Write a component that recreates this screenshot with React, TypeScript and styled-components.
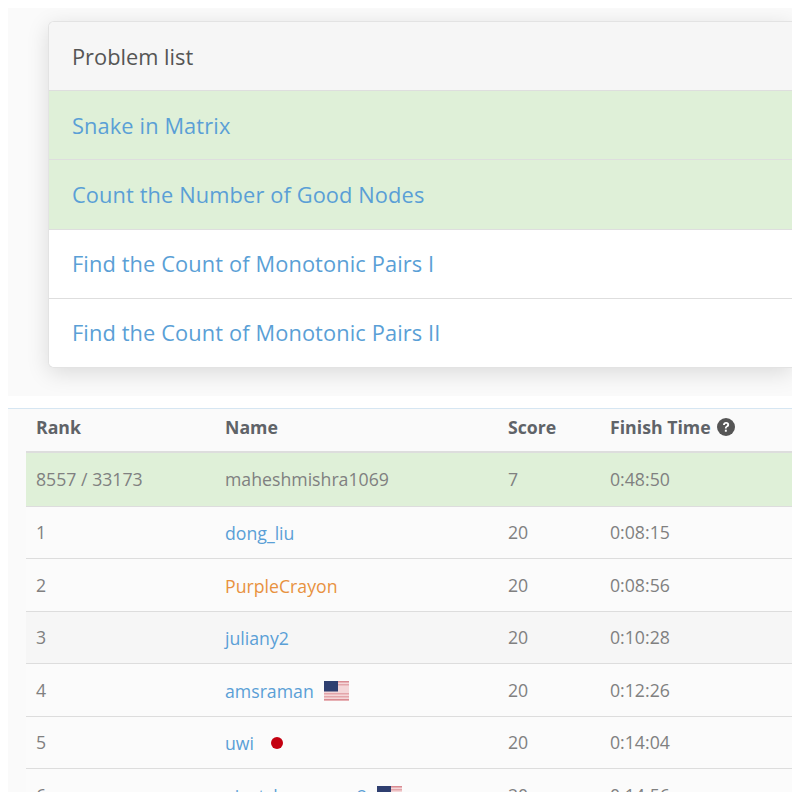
import styled, { createGlobalStyle } from 'styled-components';

const GlobalStyle = createGlobalStyle`
  html, body {
    margin: 0;
    padding: 0;
    background: #fff;
  }
  body {
    font-family: 'Open Sans', 'Noto Sans', sans-serif;
  }
`;

const Page = styled.div`
  width: 784px;
  height: 784px;
  margin: 8px 0 0 8px;
  overflow: hidden;
  display: flex;
  flex-direction: column;
  background: #fff;
`;

const TopSection = styled.section`
  height: 388px;
  flex: none;
  padding: 13px 0 0 40px;
  background: #fafafa;
  box-sizing: border-box;
  overflow: hidden;
`;

const Panel = styled.div`
  border: 1px solid #e3e3e3;
  border-right: 0;
  border-radius: 6px 0 0 6px;
  box-shadow: 0 5px 22px rgba(0, 0, 0, 0.13);
  overflow: hidden;
  background: #fff;
`;

const PanelRow = styled.div<{ $solved?: boolean; $head?: boolean }>`
  height: 68.2px;
  padding-left: 23px;
  display: flex;
  align-items: center;
  font-size: 21.8px;
  letter-spacing: ${(p) => (p.$head ? 0 : 0.12)}px;
  color: ${(p) => (p.$head ? '#555' : '#5a9fd6')};
  background: ${(p) => (p.$head ? '#f6f6f6' : p.$solved ? '#dff0d8' : '#fff')};
  border-bottom: 1px solid #dedede;

  &:last-child {
    border-bottom: 0;
  }
`;

const Board = styled.section`
  flex: 1;
  margin-top: 12px;
  padding-left: 18px;
  background: #fafafa;
  border-top: 1px solid #d6e6f2;
`;

const Table = styled.table`
  width: 100%;
  border-collapse: collapse;
  table-layout: fixed;
  font-size: 17.7px;
  color: #808080;
`;

const HeadCell = styled.th<{ $w: number }>`
  box-sizing: border-box;
  width: ${(p) => p.$w}px;
  height: 43px;
  padding: 0 0 6px 10px;
  text-align: left;
  font-weight: 700;
  color: #5f6368;
  border-bottom: 2px solid #ddd;
`;

const Row = styled.tr<{ $tone?: 'me' | 'shaded' }>`
  height: ${(p) => (p.$tone === 'me' ? 54 : 52.5)}px;
  background: ${(p) => (p.$tone === 'me' ? '#dff0d8' : p.$tone === 'shaded' ? '#f6f6f6' : '#fbfbfb')};
`;

const Cell = styled.td`
  box-sizing: border-box;
  padding: 0 0 0 10px;
  border-bottom: 1px solid #ddd;
`;

const NameCell = styled.span<{ $orange?: boolean }>`
  display: inline-flex;
  align-items: center;
  gap: 10px;
  padding-top: 2px;
  color: ${(p) => (p.$orange ? '#e8923f' : '#5a9fd6')};
`;

const PlainName = styled.span`
  color: #808080;
`;

const RedDot = styled.span`
  width: 12px;
  height: 12px;
  margin-left: 7px;
  border-radius: 50%;
  background: #c40010;
`;

const HelpIcon = () => (
  <svg width="18" height="18" viewBox="0 0 16 16" style={{ verticalAlign: '-2px', marginLeft: 2 }}>
    <circle cx="8" cy="8" r="8" fill="#555" />
    <path d="M5.3 6.2C5.4 4.6 6.5 3.6 8.1 3.6c1.6 0 2.7 1 2.7 2.3 0 1.1-.6 1.7-1.4 2.2-.6.4-.8.6-.8 1.3H7c0-1.2.4-1.8 1.2-2.3.6-.4.9-.7.9-1.1 0-.5-.4-.8-1-.8s-1 .4-1.1 1z" fill="#fff" />
    <rect x="7" y="10.4" width="1.7" height="1.8" fill="#fff" />
  </svg>
);

const UsFlag = () => (
  <svg width="25" height="20" viewBox="0 0 25 20">
    <rect width="25" height="20" fill="#f4d6d8" />
    <rect y="18" width="25" height="1.5" fill="#d98b92" />
    <rect y="15" width="25" height="1.5" fill="#e3a5aa" />
    <rect y="12" width="25" height="1.5" fill="#e3a5aa" />
    <rect x="14" y="3" width="11" height="1.5" fill="#e3a5aa" />
    <rect x="14" width="11" height="1.5" fill="#d98b92" />
    <rect width="14" height="10.5" fill="#2f3f70" />
  </svg>
);

const problems = [
  { title: 'Snake in Matrix', solved: true },
  { title: 'Count the Number of Good Nodes', solved: true },
  { title: 'Find the Count of Monotonic Pairs I' },
  { title: 'Find the Count of Monotonic Pairs II' },
];

type Entry = {
  rank: number;
  name: string;
  time: string;
  orange?: boolean;
  shaded?: boolean;
  flag?: 'us' | 'dot';
};

const entries: Entry[] = [
  { rank: 1, name: 'dong_liu', time: '0:08:15' },
  { rank: 2, name: 'PurpleCrayon', time: '0:08:56', orange: true },
  { rank: 3, name: 'juliany2', time: '0:10:28', shaded: true },
  { rank: 4, name: 'amsraman', time: '0:12:26', flag: 'us' },
  { rank: 5, name: 'uwi', time: '0:14:04', flag: 'dot' },
  { rank: 6, name: 'ainstchanmaru_2', time: '0:14:56', flag: 'us' },
];

export default function App() {
  return (
    <>
      <GlobalStyle />
      <Page>
        <TopSection>
          <Panel>
            <PanelRow $head>Problem list</PanelRow>
            {problems.map((p) => (
              <PanelRow key={p.title} $solved={p.solved}>
                {p.title}
              </PanelRow>
            ))}
          </Panel>
        </TopSection>
        <Board>
          <Table>
            <thead>
              <tr>
                <HeadCell $w={189}>Rank</HeadCell>
                <HeadCell $w={283}>Name</HeadCell>
                <HeadCell $w={102}>Score</HeadCell>
                <HeadCell $w={192}>
                  Finish Time <HelpIcon />
                </HeadCell>
              </tr>
            </thead>
            <tbody>
              <Row $tone="me">
                <Cell>8557 / 33173</Cell>
                <Cell>
                  <PlainName>maheshmishra1069</PlainName>
                </Cell>
                <Cell>7</Cell>
                <Cell>0:48:50</Cell>
              </Row>
              {entries.map((e) => (
                <Row key={e.rank} $tone={e.shaded ? 'shaded' : undefined}>
                  <Cell>{e.rank}</Cell>
                  <Cell>
                    <NameCell $orange={e.orange}>
                      {e.name}
                      {e.flag === 'us' && <UsFlag />}
                      {e.flag === 'dot' && <RedDot />}
                    </NameCell>
                  </Cell>
                  <Cell>20</Cell>
                  <Cell>{e.time}</Cell>
                </Row>
              ))}
            </tbody>
          </Table>
        </Board>
      </Page>
    </>
  );
}
